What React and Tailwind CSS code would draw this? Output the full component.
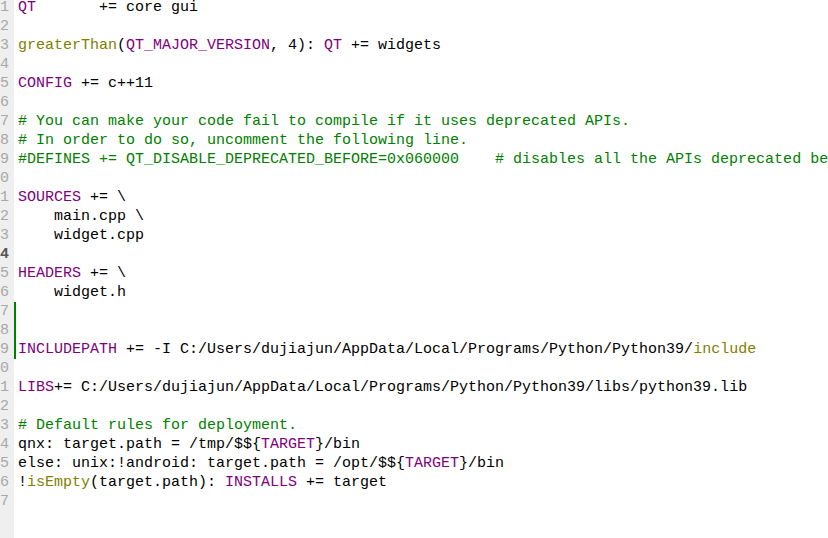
import React from "react";

const K = "text-[#800080]"; // variables / keywords
const F = "text-[#808000]"; // functions
const C = "text-[#008000]"; // comments

const lines = [
  [["QT", K], ["       += core gui"]],
  [],
  [["greaterThan", F], ["("], ["QT_MAJOR_VERSION", K], [", 4): "], ["QT", K], [" += widgets"]],
  [],
  [["CONFIG", K], [" += c++11"]],
  [],
  [["# You can make your code fail to compile if it uses deprecated APIs.", C]],
  [["# In order to do so, uncomment the following line.", C]],
  [["#DEFINES += QT_DISABLE_DEPRECATED_BEFORE=0x060000    # disables all the APIs deprecated before Qt 6.0.0", C]],
  [],
  [["SOURCES", K], [" += \\"]],
  [["    main.cpp \\"]],
  [["    widget.cpp"]],
  [],
  [["HEADERS", K], [" += \\"]],
  [["    widget.h"]],
  [],
  [],
  [["INCLUDEPATH", K], [" += -I C:/Users/dujiajun/AppData/Local/Programs/Python/Python39/"], ["include", F]],
  [],
  [["LIBS", K], ["+= C:/Users/dujiajun/AppData/Local/Programs/Python/Python39/libs/python39.lib"]],
  [],
  [["# Default rules for deployment.", C]],
  [["qnx: target.path = /tmp/$${"], ["TARGET", K], ["}/bin"]],
  [["else: unix:!android: target.path = /opt/$${"], ["TARGET", K], ["}/bin"]],
  [["!"], ["isEmpty", F], ["(target.path): "], ["INSTALLS", K], [" += target"]],
  [],
];

const changed = [17, 18, 19];
const current = 14;

export default function App() {
  return (
    <div
      className="w-[828px] h-[538px] bg-white flex overflow-hidden text-[15px] leading-[19px]"
      style={{ fontFamily: '"Liberation Mono", "DejaVu Sans Mono", monospace' }}
    >
      {/* Line number gutter */}
      <div className="w-[14px] shrink-0 bg-[#efefef] overflow-hidden">
        <div className="-mt-[2.5px]">
          {lines.map((_, i) => {
            const n = i + 1;
            return (
              <div
                key={n}
                className={
                  "flex justify-end pr-[5px] whitespace-nowrap h-[19px] " +
                  (n === current ? "text-[#555] font-bold" : "text-[#a8a8a8]")
                }
              >
                {n}
              </div>
            );
          })}
        </div>
      </div>
      {/* Change marker */}
      <div className="w-[4px] shrink-0">
        <div className="-mt-[2.5px]">
          {lines.map((_, i) => (
            <div key={i} className="h-[19px] flex">
              <div className={"w-[2px] " + (changed.includes(i + 1) ? "bg-[#008000]" : "")} />
            </div>
          ))}
        </div>
      </div>
      {/* Code */}
      <div className="flex-1 overflow-hidden">
        <div className="-mt-[2.5px]">
          {lines.map((segs, i) => (
            <div key={i} className="h-[19px] whitespace-pre text-black">
              {segs.map(([t, cls], j) => (
                <span key={j} className={cls}>
                  {t}
                </span>
              ))}
            </div>
          ))}
        </div>
      </div>
    </div>
  );
}
